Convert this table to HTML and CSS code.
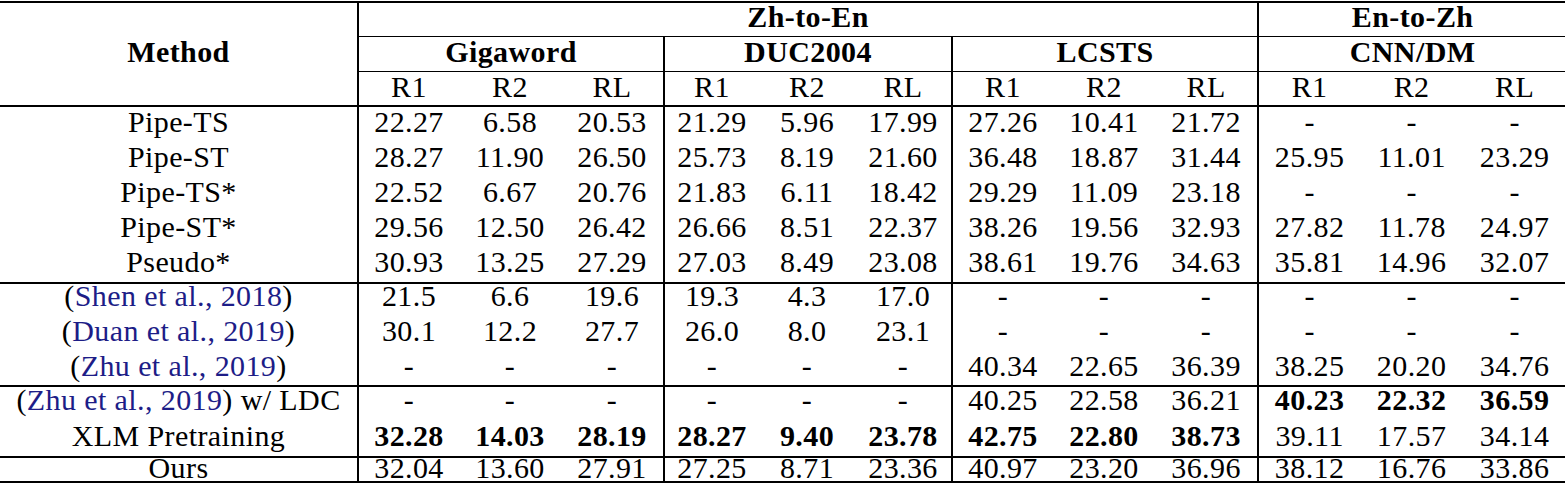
FILE: index.html
```html
<!DOCTYPE html>
<html>
<head>
  <meta charset="utf-8"/>
  <link rel="stylesheet" href="styles.css">
  <title>Cross-lingual summarization results</title>
</head>
<body>
  <table class="results">
    <colgroup>
      <col class="col-method">
      <col class="col-giga"><col class="col-giga"><col class="col-giga">
      <col class="col-duc"><col class="col-duc"><col class="col-duc">
      <col class="col-lcsts"><col class="col-lcsts"><col class="col-lcsts">
      <col class="col-cnn"><col class="col-cnn"><col class="col-cnn">
    </colgroup>
    <thead>
      <tr class="row-lang">
        <th rowspan="3" class="method-head">Method</th>
        <th colspan="9" class="sep">Zh-to-En</th>
        <th colspan="3" class="sep">En-to-Zh</th>
      </tr>
      <tr class="row-set">
        <th colspan="3" class="sep">Gigaword</th>
        <th colspan="3" class="sep">DUC2004</th>
        <th colspan="3" class="sep">LCSTS</th>
        <th colspan="3" class="sep">CNN/DM</th>
      </tr>
      <tr class="row-metric">
        <td class="sep">R1</td><td>R2</td><td>RL</td>
        <td class="sep">R1</td><td>R2</td><td>RL</td>
        <td class="sep">R1</td><td>R2</td><td>RL</td>
        <td class="sep">R1</td><td>R2</td><td>RL</td>
      </tr>
    </thead>

    <!-- our baselines -->
    <tbody class="block block-base">
      <tr>
        <td class="method">Pipe-TS</td>
        <td class="sep">22.27</td><td>6.58</td><td>20.53</td>
        <td class="sep">21.29</td><td>5.96</td><td>17.99</td>
        <td class="sep">27.26</td><td>10.41</td><td>21.72</td>
        <td class="sep">-</td><td>-</td><td>-</td>
      </tr>
      <tr>
        <td class="method">Pipe-ST</td>
        <td class="sep">28.27</td><td>11.90</td><td>26.50</td>
        <td class="sep">25.73</td><td>8.19</td><td>21.60</td>
        <td class="sep">36.48</td><td>18.87</td><td>31.44</td>
        <td class="sep">25.95</td><td>11.01</td><td>23.29</td>
      </tr>
      <tr>
        <td class="method">Pipe-TS*</td>
        <td class="sep">22.52</td><td>6.67</td><td>20.76</td>
        <td class="sep">21.83</td><td>6.11</td><td>18.42</td>
        <td class="sep">29.29</td><td>11.09</td><td>23.18</td>
        <td class="sep">-</td><td>-</td><td>-</td>
      </tr>
      <tr>
        <td class="method">Pipe-ST*</td>
        <td class="sep">29.56</td><td>12.50</td><td>26.42</td>
        <td class="sep">26.66</td><td>8.51</td><td>22.37</td>
        <td class="sep">38.26</td><td>19.56</td><td>32.93</td>
        <td class="sep">27.82</td><td>11.78</td><td>24.97</td>
      </tr>
      <tr class="last">
        <td class="method">Pseudo*</td>
        <td class="sep">30.93</td><td>13.25</td><td>27.29</td>
        <td class="sep">27.03</td><td>8.49</td><td>23.08</td>
        <td class="sep">38.61</td><td>19.76</td><td>34.63</td>
        <td class="sep">35.81</td><td>14.96</td><td>32.07</td>
      </tr>
    </tbody>

    <!-- reported numbers -->
    <tbody class="block block-cited">
      <tr>
        <td class="method">(<span class="cite">Shen et al., 2018</span>)</td>
        <td class="sep">21.5</td><td>6.6</td><td>19.6</td>
        <td class="sep">19.3</td><td>4.3</td><td>17.0</td>
        <td class="sep">-</td><td>-</td><td>-</td>
        <td class="sep">-</td><td>-</td><td>-</td>
      </tr>
      <tr>
        <td class="method">(<span class="cite">Duan et al., 2019</span>)</td>
        <td class="sep">30.1</td><td>12.2</td><td>27.7</td>
        <td class="sep">26.0</td><td>8.0</td><td>23.1</td>
        <td class="sep">-</td><td>-</td><td>-</td>
        <td class="sep">-</td><td>-</td><td>-</td>
      </tr>
      <tr class="last">
        <td class="method">(<span class="cite">Zhu et al., 2019</span>)</td>
        <td class="sep">-</td><td>-</td><td>-</td>
        <td class="sep">-</td><td>-</td><td>-</td>
        <td class="sep">40.34</td><td>22.65</td><td>36.39</td>
        <td class="sep">38.25</td><td>20.20</td><td>34.76</td>
      </tr>
    </tbody>

    <!-- extra resources -->
    <tbody class="block block-extra">
      <tr>
        <td class="method">(<span class="cite">Zhu et al., 2019</span>) w/ LDC</td>
        <td class="sep">-</td><td>-</td><td>-</td>
        <td class="sep">-</td><td>-</td><td>-</td>
        <td class="sep">40.25</td><td>22.58</td><td>36.21</td>
        <td class="sep best">40.23</td><td class="best">22.32</td><td class="best">36.59</td>
      </tr>
      <tr class="last">
        <td class="method">XLM Pretraining</td>
        <td class="sep best">32.28</td><td class="best">14.03</td><td class="best">28.19</td>
        <td class="sep best">28.27</td><td class="best">9.40</td><td class="best">23.78</td>
        <td class="sep best">42.75</td><td class="best">22.80</td><td class="best">38.73</td>
        <td class="sep">39.11</td><td>17.57</td><td>34.14</td>
      </tr>
    </tbody>

    <tbody class="block block-ours">
      <tr>
        <td class="method">Ours</td>
        <td class="sep">32.04</td><td>13.60</td><td>27.91</td>
        <td class="sep">27.25</td><td>8.71</td><td>23.36</td>
        <td class="sep">40.97</td><td>23.20</td><td>36.96</td>
        <td class="sep">38.12</td><td>16.76</td><td>33.86</td>
      </tr>
    </tbody>
  </table>
</body>
</html>
```

FILE: styles.css
```css
body {
  margin: 0;
  background: #fff;
}

.results {
  width: 1565px;
  margin-top: 1px;
  table-layout: fixed;
  border-collapse: separate;
  border-spacing: 0;
  border-top: 2px solid #000;    /* top rule */
  border-bottom: 2px solid #000; /* bottom rule */
  font-family: "Liberation Serif", "Times New Roman", serif;
  font-size: 30px;
  letter-spacing: 0.4px; /* the scan is a bit wider than tall */
  color: #000;
}

.col-method { width: 357px; }
.col-giga   { width: 102px; }
.col-duc    { width: 96px; }
.col-lcsts  { width: 102px; }
.col-cnn    { width: 103px; }

/* cells hang from the top, line-height places the baseline like the LaTeX struts */
.results th,
.results td {
  padding: 0;
  text-align: center;
  vertical-align: top;
  white-space: nowrap;
}

.results th {
  font-weight: bold;
}

/* group separators */
.results .sep {
  border-left: 2px solid #000;
}

/* header rows */
.row-lang th.sep,
.row-set th {
  border-bottom: 1px solid #000;
}

.row-lang { height: 34px; line-height: 28px; }
.row-set { height: 35px; line-height: 29px; }
.row-metric { height: 35px; line-height: 29px; }

.results .method-head {
  vertical-align: middle;
  line-height: 29px;
  padding-bottom: 6px;
}

.method-head,
.row-metric td {
  border-bottom: 2px solid #000;
}

/* body rows */
.block .last td { border-bottom: 2px solid #000; }

.block-base tr { height: 35px; line-height: 29.5px; }
.block-base tr.last { height: 37px; }

.block-cited tr { height: 35px; line-height: 24px; }
.block-cited tr.last { height: 33px; }

.block-extra tr { height: 37px; line-height: 25px; }
.block-extra tr.last { height: 34px; line-height: 23px; }

.block-ours tr { height: 23px; line-height: 19px; }

.best {
  font-weight: bold;
}

.cite {
  color: #1d1d87;
}
```
